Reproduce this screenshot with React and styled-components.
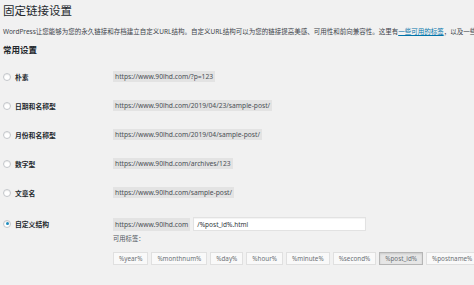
import styled, { createGlobalStyle } from "styled-components";

const GlobalStyle = createGlobalStyle`
    html, body {
        margin: 0;
        padding: 0;
        background: #f1f1f1;
        overflow: hidden;
    }
    body {
        font-family: "Noto Sans", "Noto Sans CJK SC", sans-serif;
        color: #23282d;
    }
`;

const rows = [
    { label: "朴素", code: "https://www.90lhd.com/?p=123" },
    { label: "日期和名称型", code: "https://www.90lhd.com/2019/04/23/sample-post/" },
    { label: "月份和名称型", code: "https://www.90lhd.com/2019/04/sample-post/" },
    { label: "数字型", code: "https://www.90lhd.com/archives/123" },
    { label: "文章名", code: "https://www.90lhd.com/sample-post/" },
];

const tags = ["%year%", "%monthnum%", "%day%", "%hour%", "%minute%", "%second%", "%post_id%", "%postname%"];

export default function App() {
    return (
        <Page>
            <GlobalStyle />
            <Title>固定链接设置</Title>
            <Description>
                WordPress让您能够为您的永久链接和存档建立自定义URL结构。自定义URL结构可以为您的链接提高美感、可用性和前向兼容性。这里有<a href="#">一些可用的标签</a>，以及一些
            </Description>
            <Heading>常用设置</Heading>

            <Form>
                {rows.map((row) => (
                    <Row key={row.label}>
                        <Label>
                            <Radio />
                            {row.label}
                        </Label>
                        <Field>
                            <Code>{row.code}</Code>
                        </Field>
                    </Row>
                ))}

                <Row $top>
                    <Label>
                        <Radio $checked />
                        自定义结构
                    </Label>
                    <Field>
                        <Custom>
                            <Code $tall>https://www.90lhd.com</Code>
                            <Input>/%post_id%.html</Input>
                        </Custom>
                        <Hint>可用标签：</Hint>
                        <Tags>
                            {tags.map((tag) => (
                                <Tag key={tag} $active={tag === "%post_id%"}>{tag}</Tag>
                            ))}
                        </Tags>
                    </Field>
                </Row>
            </Form>
        </Page>
    )
}

const Page = styled.div`
    padding: 0 0 0 3px;
    width: 471px;
    overflow: hidden;
`;
const Title = styled.h1`
    margin: 0;
    font-size: 11.5px;
    font-weight: 400;
    line-height: 22px;
    color: #23282d;
`;
const Description = styled.p`
    margin: 5px 0 0;
    font-size: 6.5px;
    line-height: 10px;
    white-space: nowrap;
    color: #3c434a;

    a {
        color: #0073aa;
        text-decoration: underline;
    }
`;
const Heading = styled.h2`
    margin: 8px 0 0;
    font-size: 8.5px;
    font-weight: 700;
    line-height: 10px;
    color: #23282d;
`;
const Form = styled.div`
    margin-top: 7px;
    display: flex;
    flex-direction: column;
`;
const Row = styled.div`
    display: grid;
    grid-template-columns: 110px 1fr;
    align-items: ${(p) => (p.$top ? "start" : "center")};
    height: ${(p) => (p.$top ? "auto" : "29px")};
    padding-top: ${(p) => (p.$top ? "10px" : "0")};
`;
const Label = styled.div`
    display: flex;
    align-items: center;
    gap: 4px;
    min-height: 13px;
    font-size: 6.8px;
    font-weight: 600;
    color: #23282d;
`;
const Radio = styled.span`
    width: 8px;
    height: 8px;
    box-sizing: border-box;
    border-radius: 50%;
    border: 1px solid #c3c6ca;
    background: #fff;
    box-shadow: inset 0 1px 1px rgba(0, 0, 0, 0.08);
    display: flex;
    align-items: center;
    justify-content: center;

    &::after {
        content: "";
        display: ${(p) => (p.$checked ? "block" : "none")};
        width: 3px;
        height: 3px;
        border-radius: 50%;
        background: #1e8cbe;
    }
`;
const Field = styled.div`
    display: flex;
    flex-direction: column;
    align-items: flex-start;
    min-width: 0;
`;
const Code = styled.code`
    display: inline-flex;
    align-items: center;
    height: ${(p) => (p.$tall ? "13px" : "11px")};
    padding: 0 2px;
    background: #e3e3e3;
    font-family: "Noto Sans", sans-serif;
    font-size: 6.7px;
    color: #4a4f54;
`;
const Custom = styled.div`
    display: flex;
    align-items: center;
    gap: 3px;
`;
const Input = styled.div`
    width: 173px;
    height: 14px;
    box-sizing: border-box;
    padding: 0 3px;
    display: flex;
    align-items: center;
    background: #fff;
    border: 1px solid #e2e2e2;
    box-shadow: inset 0 1px 1px rgba(0, 0, 0, 0.05);
    font-size: 6.5px;
    color: #32373c;
`;
const Hint = styled.div`
    margin-top: 4px;
    font-size: 6.3px;
    line-height: 8px;
    color: #50575e;
`;
const Tags = styled.div`
    margin-top: 9px;
    display: flex;
    gap: 3px;
`;
const Tag = styled.div`
    flex-shrink: 0;
    height: 13px;
    box-sizing: border-box;
    padding: 0 5px;
    display: flex;
    align-items: center;
    white-space: nowrap;
    font-size: 6.3px;
    color: #6b7075;
    background: ${(p) => (p.$active ? "#e6e6e6" : "#f9f9f9")};
    border: 1px solid ${(p) => (p.$active ? "#b5b5b5" : "#e0e0e0")};
    box-shadow: ${(p) => (p.$active ? "inset 0 1px 2px rgba(0,0,0,0.12)" : "0 1px 0 rgba(0,0,0,0.03)")};
`;
